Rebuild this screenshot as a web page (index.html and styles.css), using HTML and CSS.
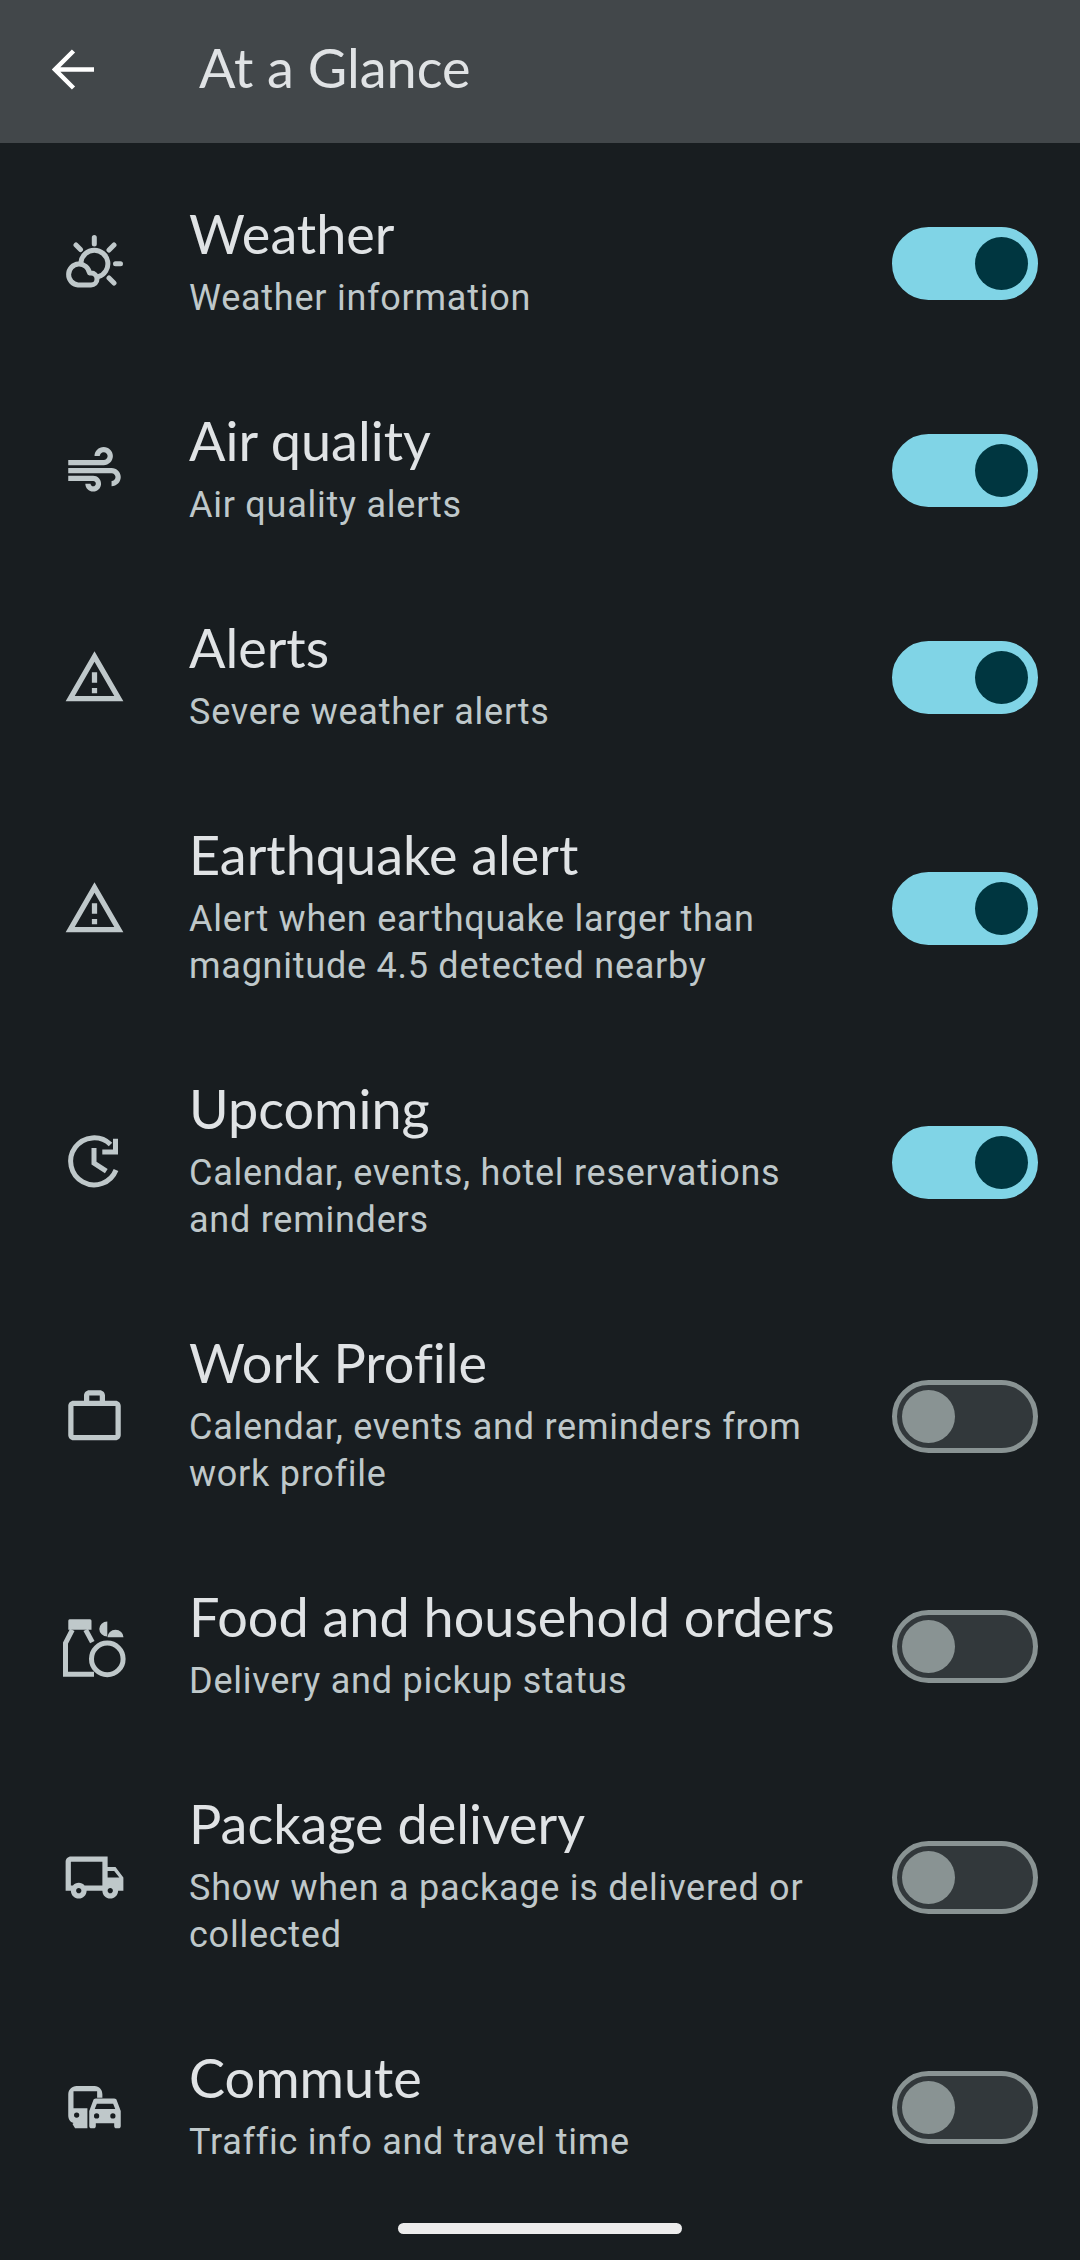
FILE: index.html
```html
<!DOCTYPE html>
<html lang="en">
<head>
    <meta charset="UTF-8">
    <meta name="viewport" content="width=device-width, initial-scale=1.0">
    <title>At a Glance</title>
    <link rel="stylesheet" href="styles.css">
</head>
<body>
    <div class="app-bar">
        <svg class="back-icon" viewBox="0 0 43 43"><path d="M42 21.5H3M21.5 3 3 21.5 21.5 40"/></svg>
        <h1 class="app-title">At a Glance</h1>
    </div>

    <div class="settings-list">
        <div class="row">
            <svg class="row-icon stroked" viewBox="0 0 63 63">
                <path d="M18 30A13.5 13.5 0 1 1 35.3 44.7"/>
                <path d="M15 53H28a6 6 0 0 0 0-12h-1.5A10.5 10.5 0 1 0 15 53z"/>
                <path d="M31.3 5.5V12M46 18l5-5M52.5 31.8h5M46 46l5 5M13 13l4.5 4.5"/>
            </svg>
            <div class="row-text">
                <div class="row-title">Weather</div>
                <div class="row-sub">Weather information</div>
            </div>
            <div class="switch on"><span class="thumb"></span></div>
        </div>

        <div class="row">
            <svg class="row-icon" viewBox="0 0 24 24"><path d="M14.5 17c0 1.65-1.35 3-3 3s-3-1.35-3-3h2c0 .55.45 1 1 1s1-.45 1-1-.45-1-1-1H2v-2h9.5c1.65 0 3 1.35 3 3zM19 6.5C19 4.57 17.43 3 15.5 3S12 4.57 12 6.5h2c0-.83.67-1.5 1.5-1.5s1.5.67 1.5 1.5S16.33 8 15.5 8H2v2h13.5c1.93 0 3.5-1.57 3.5-3.5zm-.5 4.5H2v2h16.5c.83 0 1.5.67 1.5 1.5s-.67 1.5-1.5 1.5v2c1.93 0 3.5-1.57 3.5-3.5S20.43 11 18.5 11z"/></svg>
            <div class="row-text">
                <div class="row-title">Air quality</div>
                <div class="row-sub">Air quality alerts</div>
            </div>
            <div class="switch on"><span class="thumb"></span></div>
        </div>

        <div class="row">
            <svg class="row-icon" viewBox="0 0 24 24"><path d="M12 5.99 19.53 19H4.47L12 5.99M12 2 1 21h22L12 2zm1 14h-2v2h2v-2zm0-6h-2v4h2v-4z"/></svg>
            <div class="row-text">
                <div class="row-title">Alerts</div>
                <div class="row-sub">Severe weather alerts</div>
            </div>
            <div class="switch on"><span class="thumb"></span></div>
        </div>

        <div class="row">
            <svg class="row-icon" viewBox="0 0 24 24"><path d="M12 5.99 19.53 19H4.47L12 5.99M12 2 1 21h22L12 2zm1 14h-2v2h2v-2zm0-6h-2v4h2v-4z"/></svg>
            <div class="row-text">
                <div class="row-title">Earthquake alert</div>
                <div class="row-sub">Alert when earthquake larger than<br>magnitude 4.5 detected nearby</div>
            </div>
            <div class="switch on"><span class="thumb"></span></div>
        </div>

        <div class="row">
            <svg class="row-icon stroked flat" viewBox="0 0 63 63">
                <path d="M53 39A23.5 23.5 0 1 1 47.5 13.5"/>
                <path d="M31 17V32.2L43.3 40.2"/>
                <path class="solid" d="M55 7.8V23.5H39.3V18.5H50V7.8z"/>
            </svg>
            <div class="row-text">
                <div class="row-title">Upcoming</div>
                <div class="row-sub">Calendar, events, hotel reservations<br>and reminders</div>
            </div>
            <div class="switch on"><span class="thumb"></span></div>
        </div>

        <div class="row">
            <svg class="row-icon" viewBox="0 0 24 24"><path d="M14 6V4h-4v2h4zM4 8v11h16V8H4zm16-2c1.11 0 2 .89 2 2v11c0 1.11-.89 2-2 2H4c-1.11 0-2-.89-2-2l.01-11c0-1.11.88-2 1.99-2h4V4c0-1.11.89-2 2-2h4c1.11 0 2 .89 2 2v2h4z"/></svg>
            <div class="row-text">
                <div class="row-title">Work Profile</div>
                <div class="row-sub">Calendar, events and reminders from<br>work profile</div>
            </div>
            <div class="switch"><span class="thumb"></span></div>
        </div>

        <div class="row">
            <svg class="row-icon stroked flat" viewBox="0 0 63 63">
                <path d="M9.3 14.8 2.5 28V59.2H31"/>
                <path d="M22.7 14.8 29.3 27.2"/>
                <circle cx="44.3" cy="43.9" r="15.8"/>
                <path class="solid" d="M7 4.2H27a1.5 1.5 0 0 1 1.5 1.5V14.8H5.3V5.7A1.5 1.5 0 0 1 7 4.2zM44.3 6.5A8 7.5 0 0 0 44.3 21.5zM44.5 22.2a8 7.4 0 0 1 16 0z"/>
            </svg>
            <div class="row-text">
                <div class="row-title">Food and household orders</div>
                <div class="row-sub">Delivery and pickup status</div>
            </div>
            <div class="switch"><span class="thumb"></span></div>
        </div>

        <div class="row">
            <svg class="row-icon" viewBox="0 0 24 24"><path d="M20 8h-3V4H3c-1.1 0-2 .9-2 2v11h2c0 1.66 1.34 3 3 3s3-1.34 3-3h6c0 1.66 1.34 3 3 3s3-1.34 3-3h2v-5l-3-4zm-.5 1.5 1.96 2.5H17V9.5h2.5zM6 18c-.55 0-1-.45-1-1s.45-1 1-1 1 .45 1 1-.45 1-1 1zm2.22-3c-.55-.61-1.33-1-2.22-1s-1.67.39-2.22 1H3V6h12v9H8.22zM18 18c-.55 0-1-.45-1-1s.45-1 1-1 1 .45 1 1-.45 1-1 1z"/></svg>
            <div class="row-text">
                <div class="row-title">Package delivery</div>
                <div class="row-sub">Show when a package is delivered or<br>collected</div>
            </div>
            <div class="switch"><span class="thumb"></span></div>
        </div>

        <div class="row">
            <svg class="row-icon holes" viewBox="0 0 24 24">
                <path d="M12 3.8H5.2C3.4 3.8 2 5.2 2 7v8c0 1.3.7 2.5 2 2.9l-.4.4 1 1.6H9.3V12.3H4V5.8h9V8.3h2V7c0-1.8-1.2-3.2-3-3.2zM5.2 13.9a1 1 0 1 1 0 2 1 1 0 0 1 0-2z"/>
                <path d="M20.5 9.3c-.14-.4-.5-.7-1-.7H12.5c-.5 0-.85.3-1 .7L10 13.3V19c0 .5.35.9.8.9h.9c.45 0 .8-.4.8-.9v-1h7v1c0 .5.35.9.8.9h.9c.45 0 .8-.4.8-.9V13.3zM12.9 10.6h6.2l.8 2H12.1zM12.8 14.2a1 1 0 1 1 0 2 1 1 0 0 1 0-2zM19 14.2a1 1 0 1 1 0 2 1 1 0 0 1 0-2z"/>
            </svg>
            <div class="row-text">
                <div class="row-title">Commute</div>
                <div class="row-sub">Traffic info and travel time</div>
            </div>
            <div class="switch"><span class="thumb"></span></div>
        </div>
    </div>

    <div class="nav-pill"></div>
</body>
</html>
```

FILE: styles.css
```css
* {
    margin: 0;
    padding: 0;
    box-sizing: border-box;
}

html, body {
    height: 100%;
}

body {
    position: relative;
    overflow: hidden;
    font-family: "Roboto", sans-serif;
    background: #181d20;
}

.app-bar {
    display: flex;
    align-items: center;
    height: 143px;
    padding-left: 52px;
    padding-bottom: 8px;
    background: #42474a;
}

.back-icon {
    width: 43px;
    height: 43px;
    margin-top: 4px;
    fill: none;
    stroke: #fff;
    stroke-width: 4.5;
}

.app-title {
    margin-left: 104px;
    font-family: "Lato", sans-serif;
    font-size: 54px;
    font-weight: 400;
    color: #e0e3e5;
}

.settings-list {
    padding-top: 17px;
}

.row {
    display: flex;
    align-items: center;
    padding: 47px 42px 47px 63px;
}

.row-icon {
    width: 63px;
    height: 63px;
    flex-shrink: 0;
    fill: #bfc8ca;
}

.row-icon.holes {
    fill-rule: evenodd;
}

.row-icon.stroked {
    fill: none;
    stroke: #bfc8ca;
    stroke-width: 5;
    stroke-linecap: round;
    stroke-linejoin: round;
}

.row-icon.flat {
    stroke-linecap: butt;
    stroke-linejoin: miter;
}

.row-icon .solid {
    fill: #bfc8ca;
    stroke: none;
}

.row-text {
    flex: 1;
    margin-left: 63px;
    margin-bottom: -2px;
}

.row-title {
    margin-bottom: 14px;
    font-family: "Lato", sans-serif;
    font-size: 54px;
    line-height: 54px;
    font-variant-ligatures: none;
    color: #e0e3e5;
}

.row-sub {
    font-size: 36px;
    line-height: 47px;
    letter-spacing: 0.75px;
    color: #bfc8ca;
}

.switch {
    display: flex;
    align-items: center;
    width: 146px;
    height: 73px;
    padding-left: 5px;
    flex-shrink: 0;
    background: #32383b;
    border: 5px solid #899393;
    border-radius: 37px;
}

.switch .thumb {
    width: 53px;
    height: 53px;
    background: #899393;
    border-radius: 50%;
}

.switch.on {
    justify-content: flex-end;
    padding: 0 5px 0 0;
    background: #80d4e6;
    border-color: #80d4e6;
}

.switch.on .thumb {
    background: #003640;
}

.nav-pill {
    position: absolute;
    left: 398px;
    top: 2223px;
    width: 284px;
    height: 11px;
    background: #ececec;
    border-radius: 6px;
}
```
